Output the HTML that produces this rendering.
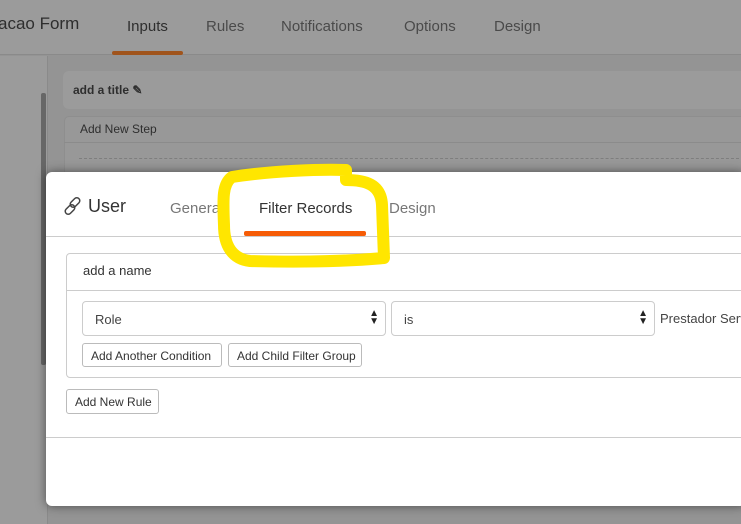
<!DOCTYPE html>
<html><head><meta charset="utf-8"><style>
*{box-sizing:border-box;margin:0;padding:0}
html,body{background:#949494}
body{width:741px;height:524px;overflow:hidden;font-family:"Liberation Sans",Roboto,sans-serif;position:relative;color:#333}
.a{position:absolute}
.tab{position:absolute;top:18px;font-size:15px;color:#4a4a4a}
.sel{position:absolute;border:1px solid #ccc;border-radius:4px;height:35px;font-size:13px;color:#444;padding:10px 12px;background:#fff}
.btn{position:absolute;border:1px solid #bbb;border-radius:3px;height:24px;font-size:12px;color:#333;padding:5px 8px;background:#fff;white-space:nowrap}
</style></head><body>
<div class="a" style="left:0;top:0;width:741px;height:55px;background:#9b9b9b;border-bottom:1px solid #8a8a8a"></div>
<div class="a" style="left:0;top:56px;width:47px;height:468px;background:#9b9b9b"></div>
<div class="a" style="left:-2px;top:14px;font-size:17px;color:#2e2e2e">acao Form</div>
<div class="tab" style="left:127px;color:#2e2e2e">Inputs</div>
<div class="a" style="left:112px;top:51px;width:71px;height:4px;background:#a0541c;border-radius:2px"></div>
<div class="tab" style="left:206px">Rules</div>
<div class="tab" style="left:281px">Notifications</div>
<div class="tab" style="left:404px">Options</div>
<div class="tab" style="left:494px">Design</div>
<div class="a" style="left:47px;top:56px;width:1px;height:468px;background:#8a8a8a"></div>
<div class="a" style="left:41px;top:93px;width:5px;height:272px;background:#676767;border-radius:2px"></div>
<div class="a" style="left:63px;top:71px;width:690px;height:38px;background:#9b9b9b;border-radius:6px"></div>
<div class="a" style="left:73px;top:83px;font-size:12px;font-weight:bold;color:#2e2e2e">add a title ✎</div>
<div class="a" style="left:64px;top:116px;width:690px;height:60px;background:#989898;border-radius:5px;border:1px solid #8e8e8e"></div>
<div class="a" style="left:64px;top:142px;width:690px;height:1px;background:#8b8b8b"></div>
<div class="a" style="left:80px;top:122px;font-size:12px;color:#2e2e2e">Add New Step</div>
<div class="a" style="left:79px;top:158px;width:670px;height:20px;border-top:1px dashed #7e7e7e"></div>

<div class="a" style="left:46px;top:172px;width:700px;height:334px;background:#fff;border-radius:6px;box-shadow:0 0 10px rgba(0,0,0,.5)"></div>
<svg class="a" style="left:64px;top:196px" width="20" height="20" viewBox="0 0 20 20"><g fill="none" stroke="#444" stroke-width="1.5"><rect x="8" y="1" width="6" height="11" rx="3" transform="rotate(45 11 6.5)"/><rect x="3" y="8" width="6" height="11" rx="3" transform="rotate(45 6 13.5)"/></g></svg>
<div class="a" style="left:88px;top:196px;font-size:18px;color:#333">User</div>
<div class="a" style="left:170px;top:200px;font-size:15px;color:#777">General</div>
<div class="a" style="left:259px;top:200px;font-size:15px;color:#333">Filter Records</div>
<div class="a" style="left:389px;top:200px;font-size:15px;color:#777">Design</div>
<div class="a" style="left:244px;top:231px;width:122px;height:5px;background:#f65c06;border-radius:2px"></div>
<div class="a" style="left:46px;top:236px;width:700px;height:1px;background:#ccc"></div>
<div class="a" style="left:66px;top:253px;width:690px;height:125px;border:1px solid #ccc;border-radius:4px"></div>
<div class="a" style="left:66px;top:290px;width:690px;height:1px;background:#ccc"></div>
<div class="a" style="left:83px;top:263px;font-size:13px;color:#333">add a name</div>
<div class="sel" style="left:82px;top:301px;width:304px">Role<span style="position:absolute;right:6px;top:8px;font-size:10px;line-height:8px;color:#222">▲<br>▼</span></div>
<div class="sel" style="left:391px;top:301px;width:264px">is<span style="position:absolute;right:6px;top:8px;font-size:10px;line-height:8px;color:#222">▲<br>▼</span></div>
<div class="a" style="left:660px;top:311px;font-size:13px;color:#444;white-space:nowrap">Prestador Serv</div>
<div class="btn" style="left:82px;top:343px;width:140px">Add Another Condition</div>
<div class="btn" style="left:228px;top:343px;width:134px">Add Child Filter Group</div>
<div class="btn" style="left:66px;top:389px;width:93px;height:25px">Add New Rule</div>
<div class="a" style="left:46px;top:437px;width:700px;height:1px;background:#ccc"></div>
<svg class="a" style="left:0;top:0" width="741" height="524"><path d="M232,177 C270,171 320,169 346,170 L346,180 C365,180 381,184 382,205 L384,258 C340,262 290,262 250,261 C232,259 224,245 224,225 C223,200 222,184 232,177 Z" fill="none" stroke="#ffe600" stroke-width="12" stroke-linejoin="round"/></svg>
</body></html>
